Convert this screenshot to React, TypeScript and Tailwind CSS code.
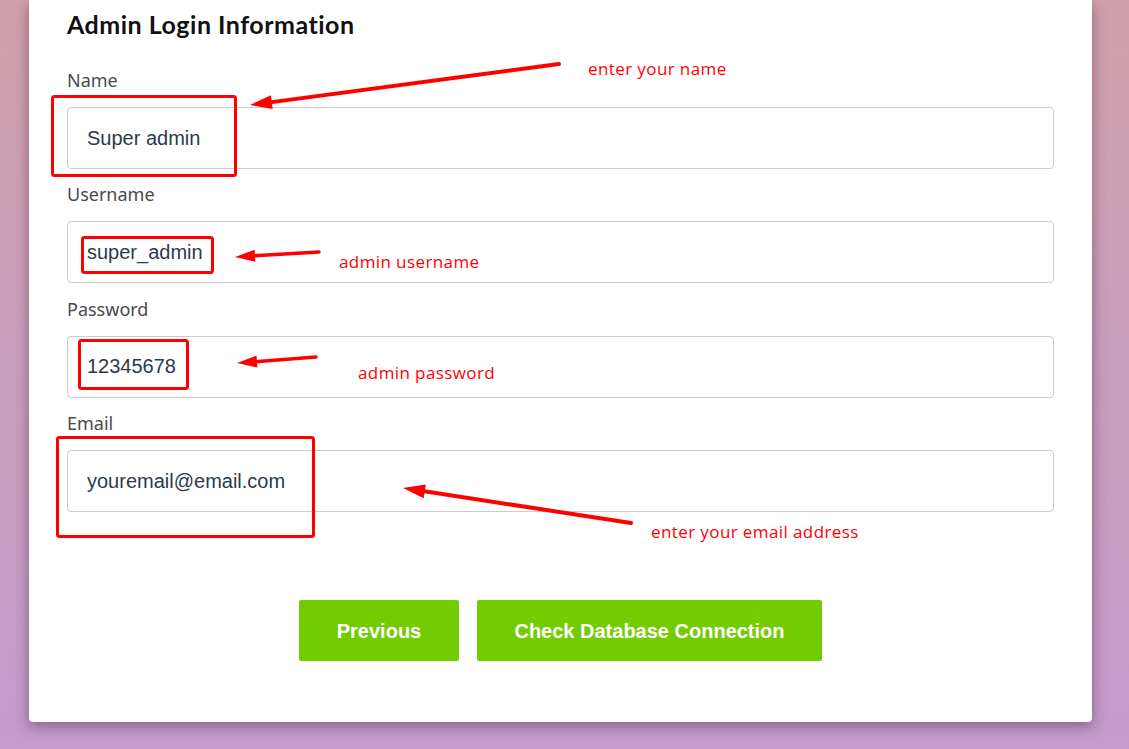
import React from "react";

type Pt = [number, number];

function Arrow({ from, to, w = 4, head = 22, half = 7 }: { from: Pt; to: Pt; w?: number; head?: number; half?: number }) {
  const dx = to[0] - from[0];
  const dy = to[1] - from[1];
  const len = Math.hypot(dx, dy);
  const ux = dx / len;
  const uy = dy / len;
  const bx = to[0] - ux * head;
  const by = to[1] - uy * head;
  const px = -uy;
  const py = ux;
  const pts = `${to[0]},${to[1]} ${bx + px * half},${by + py * half} ${bx - px * half},${by - py * half}`;
  return (
    <g>
      <line x1={from[0]} y1={from[1]} x2={bx + ux * 2} y2={by + uy * 2} stroke="#ff0000" strokeWidth={w} strokeLinecap="round" />
      <polygon points={pts} fill="#ff0000" />
    </g>
  );
}

const fields = [
  { label: "Name", value: "Super admin" },
  { label: "Username", value: "super_admin" },
  { label: "Password", value: "12345678" },
  { label: "Email", value: "youremail@email.com" },
];

const notes = [
  { text: "enter your name", cls: "left-[588px] top-[57px]" },
  { text: "admin username", cls: "left-[339px] top-[250px]" },
  { text: "admin password", cls: "left-[358px] top-[361px]" },
  { text: "enter your email address", cls: "left-[651px] top-[520px]" },
];

export default function App() {
  return (
    <div className="relative min-h-screen bg-gradient-to-b from-[#d0a1ab] to-[#c39bcc] pb-[27px]">
      <div className="ml-[29px] w-[1063px] bg-white rounded-b-[4px] shadow-[0_4px_14px_rgba(60,20,50,0.45)] px-[38px] pt-[10px] pb-[61px]">
        <h2 className="text-[25px] leading-[28px] tracking-[0.5px] font-bold text-[#111] mb-[30px] font-['Lato',sans-serif]">
          Admin Login Information
        </h2>
        {fields.map((f) => (
          <div key={f.label}>
            <div className="text-[18px] leading-[24px] text-[#4a4a4a] mb-[15px] font-['Noto_Sans',sans-serif]">{f.label}</div>
            <input
              readOnly
              value={f.value}
              className="block w-full h-[62px] mb-[13.4px] border border-[#cccccc] rounded-[4px] px-[19px] text-[20px] text-[#2c3a4a] outline-none font-['Liberation_Sans',Arial,sans-serif]"
            />
          </div>
        ))}
        <div className="flex justify-center gap-[18px] mt-[88px]">
          <button className="w-[160px] h-[61px] bg-[#73cc00] rounded-[2px] text-white text-[20px] font-bold font-['Liberation_Sans',Arial,sans-serif]">
            Previous
          </button>
          <button className="w-[345px] h-[61px] bg-[#73cc00] rounded-[2px] text-white text-[20px] font-bold font-['Liberation_Sans',Arial,sans-serif]">
            Check Database Connection
          </button>
        </div>
      </div>

      <svg className="absolute left-0 top-0 pointer-events-none" width="1129" height="749">
        <rect x="52.5" y="96.5" width="183" height="79" rx="2" fill="none" stroke="#ff0000" strokeWidth="3" />
        <rect x="82.5" y="237.5" width="130" height="35" rx="2" fill="none" stroke="#ff0000" strokeWidth="3" />
        <rect x="79.5" y="340.5" width="108" height="48" rx="2" fill="none" stroke="#ff0000" strokeWidth="3" />
        <rect x="57.5" y="437.5" width="256" height="99" rx="2" fill="none" stroke="#ff0000" strokeWidth="3" />
        <Arrow from={[559, 64]} to={[250, 105]} w={4} head={22} half={7} />
        <Arrow from={[319, 252]} to={[235, 257]} w={3.5} head={20} half={6} />
        <Arrow from={[316, 357]} to={[237, 363]} w={3.5} head={20} half={6} />
        <Arrow from={[631, 523]} to={[403, 488]} w={4} head={22} half={7} />
      </svg>
      {notes.map((n) => (
        <span
          key={n.text}
          className={`absolute ${n.cls} text-[17px] leading-[24px] tracking-[0.4px] text-[#ff0000] whitespace-nowrap font-['Open_Sans',sans-serif]`}
        >
          {n.text}
        </span>
      ))}
    </div>
  );
}
